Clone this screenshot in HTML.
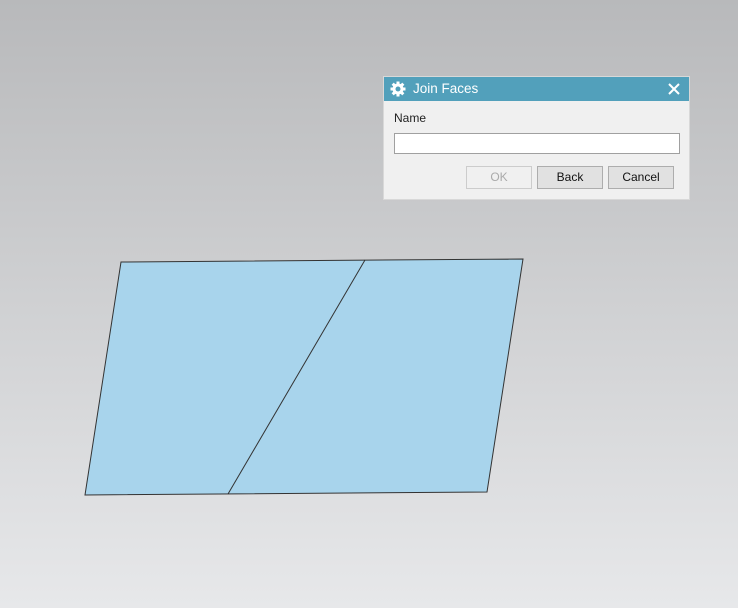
<!DOCTYPE html>
<html><head><style>
body{margin:0;width:738px;height:608px;overflow:hidden;background:linear-gradient(#b8b9bb,#e7e8ea);font-family:"Liberation Sans",sans-serif;position:relative}
.dlg{position:absolute;left:384px;top:77px;width:305px;height:122px;background:#f0f0f0;box-shadow:0 0 0 1px #d8d8d8}
.tb{height:24px;background:#52a0bb;color:#fff;font-size:13.5px;line-height:24px;position:relative}
.tb span{position:absolute;left:29px}
.lbl{position:absolute;left:10px;top:34px;font-size:12px;color:#222}
.inp{position:absolute;left:10px;top:56px;width:284px;height:19px;background:#fff;border:1px solid #a0a0a0}
.btn{position:absolute;top:89px;width:64px;height:21px;border:1px solid #adadad;background:#e1e1e1;font-size:12px;text-align:center;line-height:21px;color:#111}
</style></head><body>
<svg width="738" height="608" style="position:absolute;left:0;top:0">
<polygon points="121,262 523,259 487,492 85,495" fill="#a8d4ec" stroke="#333" stroke-width="1"/>
<line x1="365" y1="260" x2="228" y2="494" stroke="#333" stroke-width="1"/>
</svg>
<div class="dlg">
<div class="tb">
<svg width="16" height="16" style="position:absolute;left:6px;top:4px" viewBox="0 0 16 16"><g fill="#fff"><circle cx="8" cy="8" r="5.5"/><rect x="6.5" y="0.5" width="3" height="15"/><rect x="0.5" y="6.5" width="15" height="3"/><rect x="6.5" y="0.5" width="3" height="15" transform="rotate(45 8 8)"/><rect x="6.5" y="0.5" width="3" height="15" transform="rotate(-45 8 8)"/></g><circle cx="8" cy="8" r="2.5" fill="#52a0bb"/></svg>
<span>Join Faces</span>
<svg width="12" height="12" style="position:absolute;left:284px;top:6px"><path d="M1 1L11 11M11 1L1 11" stroke="#fff" stroke-width="2"/></svg>
</div>
<div class="lbl">Name</div>
<div class="inp"></div>
<div class="btn" style="left:82px;color:#aaa;background:#f0f0f0;border-color:#ccc">OK</div>
<div class="btn" style="left:153px">Back</div>
<div class="btn" style="left:224px">Cancel</div>
</div>
</body></html>
